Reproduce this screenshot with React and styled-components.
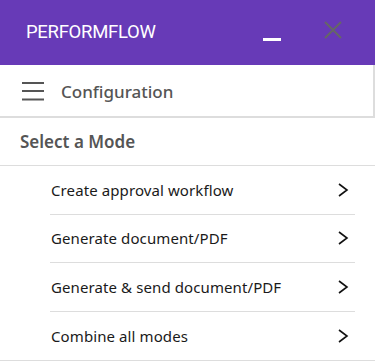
import styled, { createGlobalStyle } from "styled-components";

const GlobalStyle = createGlobalStyle`
  body {
    margin: 0;
    background: #fff;
    font-family: "Noto Sans", "Open Sans", sans-serif;
  }
`;

const Panel = styled.div`
  width: 375px;
  height: 361px;
  overflow: hidden;
  background: #fff;
`;

const Header = styled.header`
  height: 65px;
  background: #673ab7;
  display: flex;
  align-items: center;
  padding: 0 0 0 26px;
  box-sizing: border-box;
`;

const Brand = styled.div`
  flex: 1;
  color: #fff;
  font-family: Roboto, "Liberation Sans", sans-serif;
  font-size: 18.5px;
  letter-spacing: -0.3px;
  margin-top: -1px;
`;

const HeadButton = styled.button`
  width: 40px;
  height: 40px;
  padding: 0;
  border: 0;
  background: none;
  display: flex;
  align-items: center;
  justify-content: center;
  margin-right: ${(p) => p.$gap || 0}px;
  margin-top: ${(p) => p.$lift || 0}px;
`;

const ConfigBar = styled.div`
  height: 53px;
  display: flex;
  align-items: center;
  gap: 17px;
  padding-left: 22px;
  border-right: 2px solid #ddd;
  border-bottom: 2px solid #ddd;
  box-sizing: border-box;
`;

const ConfigTitle = styled.span`
  font-size: 17px;
  color: #555;
  font-weight: 500;
  margin-top: 1px;
`;

const SectionTitle = styled.div`
  height: 48px;
  display: flex;
  align-items: center;
  padding-left: 20px;
  border-bottom: 1px solid #ddd;
  box-sizing: border-box;
  font-size: 17px;
  font-weight: 600;
  color: #555;
`;

const List = styled.ul`
  list-style: none;
  margin: 0;
  padding: 0;
  border-bottom: 1px solid #ddd;
`;

const Item = styled.li`
  margin: 0 20px 0 50px;
  height: 48.5px;
  box-sizing: border-box;
  display: flex;
  align-items: center;
  justify-content: space-between;
  padding: 0 6px 0 1px;
  border-bottom: ${(p) => (p.$last ? "none" : "1px solid #ddd")};
  font-size: 15px;
  color: #1a1a1a;
  letter-spacing: 0.1px;
`;

const Hamburger = () => (
  <svg width="22" height="20" viewBox="0 0 22 20">
    <g stroke="#555" strokeWidth="2">
      <line x1="0" y1="2" x2="22" y2="2" />
      <line x1="0" y1="10" x2="22" y2="10" />
      <line x1="0" y1="18.5" x2="22" y2="18.5" />
    </g>
  </svg>
);

const Chevron = () => (
  <svg width="12" height="14" viewBox="0 0 12 14">
    <path d="M2 1 L10 7 L2 13" fill="none" stroke="#111" strokeWidth="1.6" />
  </svg>
);

const modes = [
  "Create approval workflow",
  "Generate document/PDF",
  "Generate & send document/PDF",
  "Combine all modes",
];

export default function App() {
  return (
    <>
      <GlobalStyle />
      <Panel>
        <Header>
          <Brand>PERFORMFLOW</Brand>
          <HeadButton $gap={21} aria-label="minimize">
            <svg width="18" height="20" viewBox="0 0 18 20">
              <rect x="0" y="15" width="18" height="3" fill="#fff" />
            </svg>
          </HeadButton>
          <HeadButton $gap={22} $lift={-5} aria-label="close">
            <svg width="20" height="20" viewBox="0 0 20 20">
              <path d="M2 2 L18 18 M18 2 L2 18" stroke="#666" strokeWidth="2" />
            </svg>
          </HeadButton>
        </Header>
        <ConfigBar>
          <Hamburger />
          <ConfigTitle>Configuration</ConfigTitle>
        </ConfigBar>
        <SectionTitle>Select a Mode</SectionTitle>
        <List>
          {modes.map((m, i) => (
            <Item key={m} $last={i === modes.length - 1}>
              {m}
              <Chevron />
            </Item>
          ))}
        </List>
      </Panel>
    </>
  );
}
